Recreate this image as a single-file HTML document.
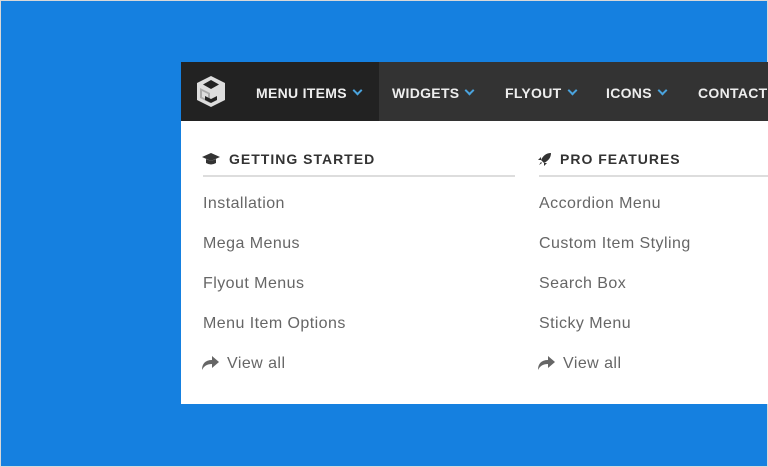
<!DOCTYPE html>
<html><head><meta charset="utf-8"><style>
html,body{margin:0;padding:0}
body{width:768px;height:467px;position:relative;overflow:hidden;background:#1580e0;font-family:"Liberation Sans",sans-serif}
.frame{position:absolute;left:0;top:0;width:766px;height:465px;border:1px solid #d8d8d8}
.nav{position:absolute;left:181px;top:62px;width:587px;height:59px;background:#333;}
.logo{position:absolute;left:0;top:0;width:60px;height:59px;background:#222}
.active{position:absolute;left:60px;top:0;width:138px;height:59px;background:#222}
.item{position:absolute;top:0;height:59px;line-height:62px;color:#eee;font-size:14px;font-weight:bold;letter-spacing:0.3px;white-space:nowrap}
.chev{display:inline-block;width:5px;height:5px;border-right:2px solid #4aa3dd;border-bottom:2px solid #4aa3dd;transform:rotate(45deg);margin-left:7px;position:relative;top:-4px}
.panel{position:absolute;left:181px;top:121px;width:587px;height:283px;background:#fff}
.h{position:absolute;top:151px;font-size:14px;font-weight:bold;color:#333;letter-spacing:1px}
.line{position:absolute;top:175px;height:2px;background:#ddd}
.l{position:absolute;font-size:16px;color:#666;white-space:nowrap;letter-spacing:0.45px}
</style></head><body>
<div class="frame"></div>
<div class="nav">
 <div class="logo">
  <svg width="60" height="59" viewBox="0 0 60 59"><g fill="#ddd">
   <polygon points="30,14 44,21 44,38 30,45 16,38 16,21"/>
   </g><polygon points="30,18 38,22.5 30,27 22,22.5" fill="#222"/>
   <polygon points="19,26 29,31 29,41 19,36" fill="#aaa"/>
   <polygon points="21,29 27,32 27,38 21,35" fill="#ddd"/>
   <polygon points="24,34 30,37 36,34 36,38 30,41 24,38" fill="#222"/>
  </svg>
 </div>
 <div class="active"></div>
 <div class="item" style="left:75px">MENU ITEMS<span class="chev"></span></div>
 <div class="item" style="left:211px">WIDGETS<span class="chev"></span></div>
 <div class="item" style="left:324px">FLYOUT<span class="chev"></span></div>
 <div class="item" style="left:425px">ICONS<span class="chev"></span></div>
 <div class="item" style="left:517px">CONTACT</div>
</div>
<div class="panel"></div>
<svg style="position:absolute;left:202px;top:153px" width="18" height="12" viewBox="0 0 18 12"><polygon points="9,0 18,4 9,8 0,4" fill="#333"/><path d="M4,6 v4 q5,3 10,0 v-4 l-5,2z" fill="#333"/></svg>
<div class="h" style="left:229px">GETTING STARTED</div>
<div class="line" style="left:203px;width:312px"></div>
<svg style="position:absolute;left:538px;top:152px" width="14" height="14" viewBox="0 0 14 14"><path d="M13,1 C8,1 5,4 3,8 L6,11 C10,9 13,6 13,1Z M3,8 L0,8 L3,5Z M6,11 L6,14 L9,11Z M3,10 L1,13 L4,11Z" fill="#333"/></svg>
<div class="h" style="left:560px">PRO FEATURES</div>
<div class="line" style="left:539px;width:229px"></div>
<div class="l" style="left:203px;top:195px">Installation</div>
<div class="l" style="left:203px;top:235px">Mega Menus</div>
<div class="l" style="left:203px;top:275px">Flyout Menus</div>
<div class="l" style="left:203px;top:315px">Menu Item Options</div>
<svg style="position:absolute;left:202px;top:356px" width="17" height="14" viewBox="0 0 17 14"><path d="M10,0 L17,6 L10,12 L10,8 C5,8 2,10 0,14 C0,8 3,4 10,4Z" fill="#666"/></svg>
<div class="l" style="left:227px;top:355px">View all</div>
<div class="l" style="left:539px;top:195px">Accordion Menu</div>
<div class="l" style="left:539px;top:235px">Custom Item Styling</div>
<div class="l" style="left:539px;top:275px">Search Box</div>
<div class="l" style="left:539px;top:315px">Sticky Menu</div>
<svg style="position:absolute;left:538px;top:356px" width="17" height="14" viewBox="0 0 17 14"><path d="M10,0 L17,6 L10,12 L10,8 C5,8 2,10 0,14 C0,8 3,4 10,4Z" fill="#666"/></svg>
<div class="l" style="left:563px;top:355px">View all</div>
</body></html>
